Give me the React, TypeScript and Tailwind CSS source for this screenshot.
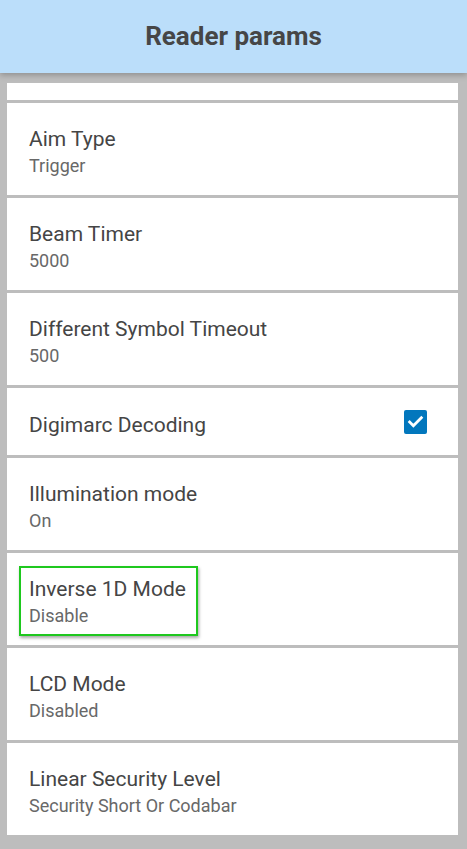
import React from "react";

type Param = {
  title: string;
  value?: string;
  checked?: boolean;
  highlight?: boolean;
};

const params: Param[] = [
  { title: "Aim Type", value: "Trigger" },
  { title: "Beam Timer", value: "5000" },
  { title: "Different Symbol Timeout", value: "500" },
  { title: "Digimarc Decoding", checked: true },
  { title: "Illumination mode", value: "On" },
  { title: "Inverse 1D Mode", value: "Disable", highlight: true },
  { title: "LCD Mode", value: "Disabled" },
  { title: "Linear Security Level", value: "Security Short Or Codabar" },
];

function CheckBox() {
  return (
    <div className="w-[23px] h-[24px] rounded-[2px] bg-[#0277bd] flex items-center justify-center">
      <svg width="17" height="17" viewBox="0 0 16 16" fill="none">
        <path
          d="M2.5 8.5l3.5 3.5 7.5-7.5"
          stroke="white"
          strokeWidth="2.6"
          strokeLinecap="square"
        />
      </svg>
    </div>
  );
}

function ParamRow({ p }: { p: Param }) {
  if (p.checked !== undefined) {
    return (
      <div className="bg-white h-[67px] flex items-center justify-between pl-[22px] pr-[31px]">
        <div className="text-[21px] leading-[26px] text-[#454545] pt-[7px]">{p.title}</div>
        <CheckBox />
      </div>
    );
  }
  const body = (
    <div>
      <div className="text-[21px] leading-[26px] text-[#454545]">{p.title}</div>
      <div className="text-[18px] leading-[22px] mt-[3px] text-[#686868]">{p.value}</div>
    </div>
  );
  return (
    <div className="bg-white h-[92px] flex items-center pl-[22px] pt-[4px]">
      {p.highlight ? (
        <div className="ml-[-10px] pl-[8px] pr-[10px] pt-[8px] pb-[7px] border-2 border-[#1ec81e] shadow-[1px_2px_3px_rgba(0,0,0,0.35)]">
          {body}
        </div>
      ) : (
        body
      )}
    </div>
  );
}

export default function App() {
  return (
    <div
      className="w-[467px] h-[849px] overflow-hidden bg-[#bdbdbd] flex flex-col"
      style={{ fontFamily: "Roboto, 'Noto Sans', sans-serif" }}
    >
      <div className="h-[73px] shrink-0 bg-[#bbdefa] flex items-center justify-center shadow-[0_2px_6px_rgba(0,0,0,0.25)] relative z-10">
        <h1 className="text-[26px] font-bold text-[#464646]">Reader params</h1>
      </div>
      <div className="pl-[7px] pr-[9px] pt-[10px] flex flex-col gap-[3px]">
        <div className="bg-white h-[17px]" />
        {params.map((p) => (
          <ParamRow key={p.title} p={p} />
        ))}
      </div>
    </div>
  );
}
